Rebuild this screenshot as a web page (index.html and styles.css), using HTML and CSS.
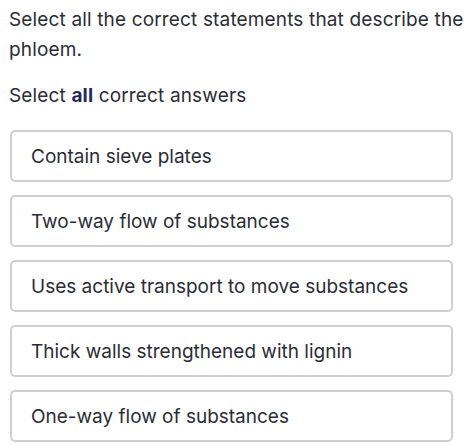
FILE: index.html
```html
<!DOCTYPE html>
<html>
<head>
<meta charset="utf-8">
<link rel="stylesheet" href="styles.css">
</head>
<body>
<div class="page">
  <p class="question">Select all the correct statements that describe the phloem.</p>
  <p class="instruction">Select <b>all</b> correct answers</p>
  <div class="options">
    <div class="option">Contain sieve plates</div>
    <div class="option">Two-way flow of substances</div>
    <div class="option">Uses active transport to move substances</div>
    <div class="option">Thick walls strengthened with lignin</div>
    <div class="option">One-way flow of substances</div>
  </div>
</div>
</body>
</html>
```
FILE: styles.css
```css
html, body {
  margin: 0;
  padding: 0;
  background: #ffffff;
}
.page {
  padding: 5px 10px 0 9px;
  font-family: Inter, "Noto Sans", sans-serif;
  color: #2b2c36;
}
.question {
  margin: 0;
  font-size: 19px;
  line-height: 30px;
  letter-spacing: 0.15px;
}
.instruction {
  margin: 16px 0 0 0;
  font-size: 19px;
  line-height: 30px;
  letter-spacing: 0.15px;
}
.instruction b {
  font-weight: 700;
  color: #1f2a5c;
}
.options {
  margin-top: 19px;
  display: flex;
  flex-direction: column;
  gap: 13px;
  width: 443px;
  margin-left: 1px;
}
.option {
  box-sizing: border-box;
  height: 52px;
  border: 2px solid #cfcfcf;
  border-radius: 5px;
  padding: 0 0 0 19px;
  display: flex;
  align-items: center;
  font-size: 19px;
}
```
